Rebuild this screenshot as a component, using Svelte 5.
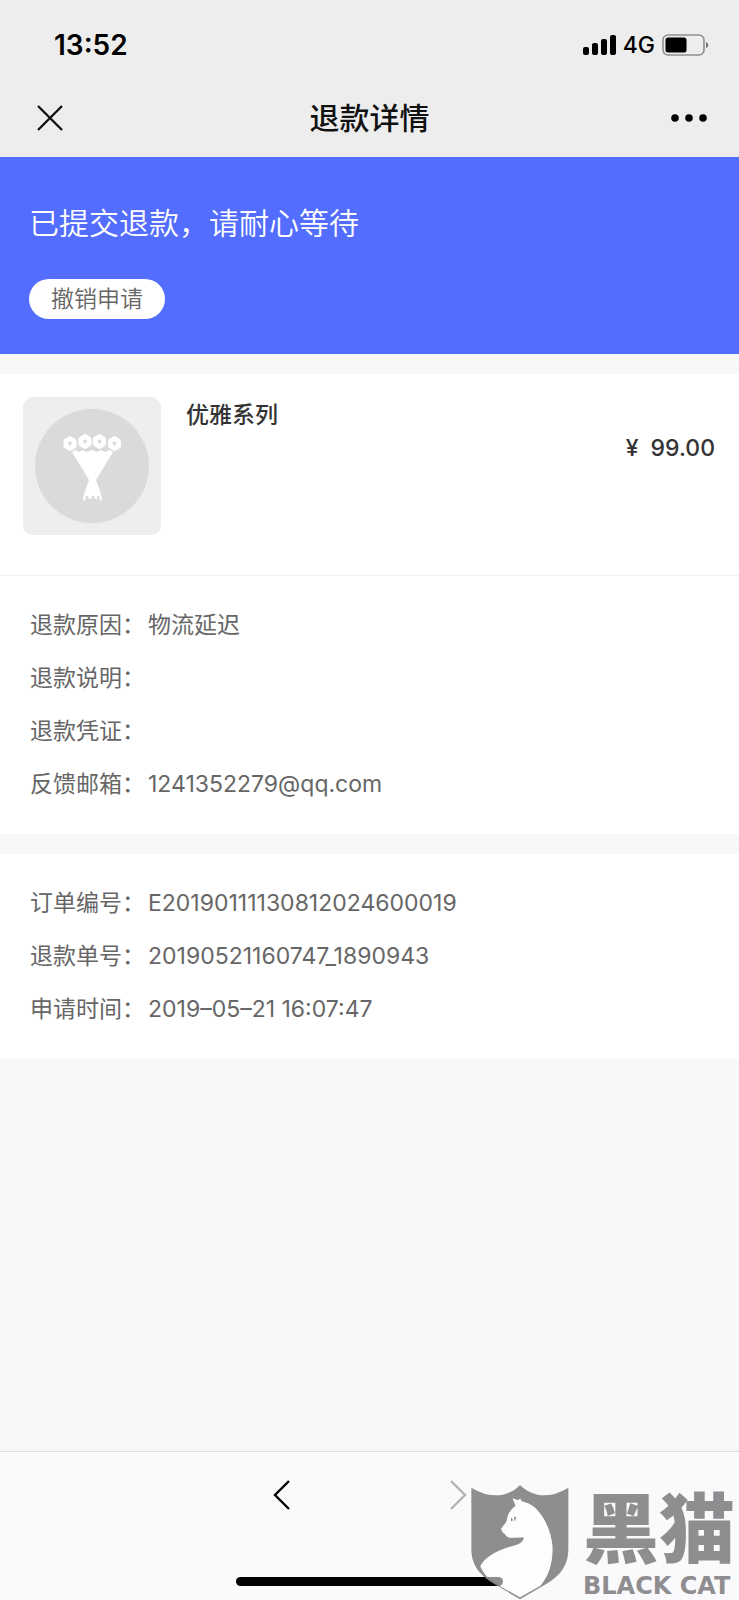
<script lang="ts">
    const title = '退款详情';

    const refundInfo = [
        { label: '退款原因', value: '物流延迟' },
        { label: '退款说明', value: '' },
        { label: '退款凭证', value: '' },
        { label: '反馈邮箱', value: '1241352279@qq.com' },
    ];

    const orderInfo = [
        { label: '订单编号', value: 'E20190111130812024600019' },
        { label: '退款单号', value: '20190521160747_1890943' },
        { label: '申请时间', value: '2019–05–21 16:07:47' },
    ];

    let product = { name: '优雅系列', price: '99.00' };
</script>

<div class="page">
    <header>
        <div class="status">
            <span class="clock">13:52</span>
            <div class="signals">
                <svg width="34" height="22" viewBox="0 0 34 22">
                    <rect x="0" y="13" width="6" height="8" rx="2" />
                    <rect x="9" y="9" width="6" height="12" rx="2" />
                    <rect x="18" y="5" width="6" height="16" rx="2" />
                    <rect x="27" y="1" width="6" height="20" rx="2" />
                </svg>
                <span class="network">4G</span>
                <svg width="48" height="24" viewBox="0 0 48 24">
                    <rect x="2" y="2" width="41" height="20" rx="5" fill="none" stroke="#8e8e8e" stroke-width="1.6" />
                    <rect x="4.5" y="4.5" width="21" height="15" rx="2.5" />
                    <path d="M45 9c3 1 3 5 0 6z" fill="#777" />
                </svg>
            </div>
        </div>
        <div class="navbar">
            <button class="icon close" aria-label="关闭">
                <svg width="26" height="26" viewBox="0 0 26 26" fill="none" stroke="#111" stroke-width="2.4">
                    <path d="M1 1l24 24M25 1L1 25" />
                </svg>
            </button>
            <h1>{title}</h1>
            <button class="icon" aria-label="更多">
                <svg width="40" height="10" viewBox="0 0 40 10">
                    <circle cx="6" cy="5" r="3.8" />
                    <circle cx="20" cy="5" r="3.8" />
                    <circle cx="34" cy="5" r="3.8" />
                </svg>
            </button>
        </div>
    </header>

    <section class="banner">
        <p>已提交退款，请耐心等待</p>
        <button class="cancel">撤销申请</button>
    </section>

    <section class="card">
        <div class="product">
            <div class="thumb">
                <svg viewBox="0 0 138 138">
                    <circle cx="69" cy="69" r="57" fill="#dadada" />
                    <g fill="none" stroke="#fff" stroke-width="5" stroke-linejoin="round">
                        <path d="M47 41.500l4 2.500v5l-4 2.500l-4-2.500v-5z" />
                        <path d="M62 39.500l4 2.500v5l-4 2.500l-4-2.500v-5z" />
                        <path d="M76.500 39.500l4 2.500v5l-4 2.500l-4-2.500v-5z" />
                        <path d="M91.500 41.500l4 2.500v5l-4 2.500l-4-2.500v-5z" />
                    </g>
                    <path d="M49 55l3-2 4 2 4-2 4 2 5-2 5 2 4-2 4 2 4-2 4 2-17 28 5 14 1 7-2-1-1-4-2 0 0 3-2 0-1-3-2 0-1 3-2 0-1-3-2 0-1 4-2 1 1-7 5-14z" fill="#fff" />
                </svg>
            </div>
            <h2>{product.name}</h2>
            <div class="price"><span>¥</span><span>{product.price}</span></div>
        </div>
        <dl>
            {#each refundInfo as item}
                <div class="row">
                    <dt>{item.label}：</dt>
                    <dd>{item.value}</dd>
                </div>
            {/each}
        </dl>
    </section>

    <section class="card">
        <dl>
            {#each orderInfo as item}
                <div class="row">
                    <dt>{item.label}：</dt>
                    <dd>{item.value}</dd>
                </div>
            {/each}
        </dl>
    </section>

    <footer>
        <nav>
            <button class="icon" aria-label="后退">
                <svg width="18" height="32" viewBox="0 0 18 32" fill="none" stroke="#000" stroke-width="2.4">
                    <path d="M16 2L2 16l14 14" />
                </svg>
            </button>
            <button class="icon" aria-label="前进" disabled>
                <svg width="18" height="32" viewBox="0 0 18 32" fill="none" stroke="#b2b2b2" stroke-width="2.4">
                    <path d="M2 2l14 14L2 30" />
                </svg>
            </button>
        </nav>
        <div class="home-bar"></div>

        <div class="watermark">
            <svg width="98" height="116" viewBox="30 27 294 348">
                <path
                    fill="#8f8d90"
                    fill-rule="evenodd"
                    d="M31 38Q78 66 122 60Q158 52 177 30Q197 52 233 60Q276 66 322 38V222C322 270 300 305 240 336L177 373L112 334C55 302 31 270 31 222Z
                       M155 70L164 93C145 106 140 120 138 135C135 146 126 152 121 160C121 171 128 174 132 177C136 184 141 188 150 188L189 187C187 205 168 211 145 216C101 228 68 252 58 274C70 302 90 318 115 332L177 367L238 332C263 304 277 260 274 211C269 162 243 105 201 85L182 79L178 71L170 76Z"
                />
                <path fill="#fff" fill-opacity=".55" d="M155 70L164 93C145 106 140 120 138 135C135 146 126 152 121 160C121 171 128 174 132 177C136 184 141 188 150 188L189 187C187 205 168 211 145 216C101 228 68 252 58 274C70 302 90 318 115 332L177 367L238 332C263 304 277 260 274 211C269 162 243 105 201 85L182 79L178 71L170 76Z" />
                <path d="M150 139V128Q157 130 154 138ZM159 125L166 127Q165 137 157 140Q162 134 159 125Z" fill="#8f8d90" />
            </svg>
            <div class="brand">
                <span class="brand-cn">黑猫</span>
                <span class="brand-en">BLACK CAT</span>
            </div>
        </div>
    </footer>
</div>

<style>
    :global(body){
        margin: 0;
        background-color: #f7f7f7;
    }

    .page{
        display: flex;
        flex-direction: column;
        min-height: 100vh;
        font-family: Inter, "Noto Sans CJK SC", sans-serif;
        color: #666;
    }

    h1, h2, p, dl, dd{
        margin: 0;
    }

    button{
        border: none;
        padding: 0;
        font-family: inherit;
        cursor: pointer;
    }

    svg{
        display: block;
    }

    .icon{
        background: none;
    }

    header{
        background-color: #ededed;
        color: #000;
    }

    .status{
        display: flex;
        justify-content: space-between;
        align-items: center;
        height: 54px;
        padding: 18px 30px 7px 54px;
    }

    .clock{
        font-size: 28px;
        font-weight: 600;
    }

    .signals{
        display: flex;
        align-items: center;
        gap: 6px;
    }

    .network{
        font-size: 23px;
        font-weight: 500;
    }

    .navbar{
        display: grid;
        grid-template-columns: 40px 1fr 40px;
        align-items: center;
        height: 78px;
        padding: 0 30px;
    }

    .close{
        padding-left: 7px;
    }

    h1{
        padding-bottom: 4px;
        text-align: center;
        font-size: 30px;
        font-weight: 500;
        color: #111;
    }

    .banner{
        padding: 44px 29px 35px;
        background-color: #536dfe;
        color: #fff;
    }

    .banner p{
        margin-bottom: 34px;
        font-size: 30px;
        font-weight: 350;
        line-height: 44px;
    }

    .cancel{
        display: block;
        height: 40px;
        padding: 0 22px;
        border-radius: 20px;
        background-color: #fff;
        color: #666;
        font-size: 23px;
        font-weight: 350;
        line-height: 36px;
    }

    .card{
        margin-top: 20px;
        background-color: #fff;
    }

    .product{
        display: flex;
        align-items: flex-start;
        padding: 23px 24px 40px 23px;
        border-bottom: 1px solid #f0f0f0;
    }

    .thumb{
        flex: none;
        width: 138px;
        margin-right: 25px;
        border-radius: 10px;
        background-color: #eee;
    }

    h2{
        flex: 1;
        font-size: 23px;
        font-weight: 500;
        line-height: 36px;
        color: #333;
    }

    .price{
        display: flex;
        gap: 12px;
        padding-top: 34px;
        font-size: 23px;
        font-weight: 500;
        line-height: 34px;
        color: #333;
    }

    dl{
        padding: 23px 30px;
    }

    .row{
        display: flex;
        gap: 3px;
        font-size: 23px;
        font-weight: 400;
        line-height: 53px;
    }

    footer{
        position: relative;
        display: flex;
        flex-direction: column;
        align-items: center;
        margin-top: auto;
        border-top: 1px solid #ddd;
        background-color: #fafafc;
    }

    nav{
        display: flex;
        gap: 158px;
        padding: 27px 0 66px;
    }

    .home-bar{
        width: 36%;
        height: 9px;
        margin-bottom: 14px;
        border-radius: 5px;
        background-color: #000;
    }

    .watermark{
        position: absolute;
        right: 4px;
        bottom: 0;
        display: flex;
        gap: 14px;
        color: #8f8d90;
    }

    .brand{
        display: flex;
        flex-direction: column;
        gap: 12px;
        padding-top: 4px;
    }

    .brand-cn{
        font-family: "Noto Sans CJK SC", sans-serif;
        font-size: 76px;
        font-weight: 900;
        line-height: 72px;
    }

    .brand-en{
        font-family: "DejaVu Sans", sans-serif;
        font-size: 24px;
        font-weight: 700;
        line-height: 28px;
        white-space: nowrap;
    }
</style>
